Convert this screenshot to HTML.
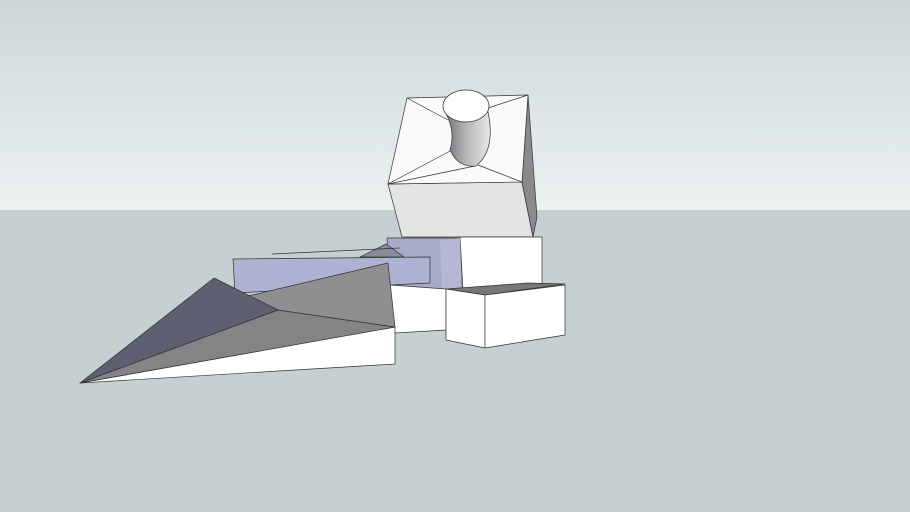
<!DOCTYPE html>
<html><head><style>html,body{margin:0;padding:0;width:910px;height:512px;overflow:hidden}</style></head>
<body>
<svg width="910" height="512" viewBox="0 0 910 512" xmlns="http://www.w3.org/2000/svg">
<defs>
<linearGradient id="sky" x1="0" y1="0" x2="0" y2="1">
<stop offset="0" stop-color="#cbd6d9"/><stop offset="1" stop-color="#ecf1f1"/>
</linearGradient>
<linearGradient id="cyl" x1="0" y1="0" x2="1" y2="0">
<stop offset="0" stop-color="#6e6e72"/><stop offset="0.5" stop-color="#b8b8bb"/><stop offset="1" stop-color="#e8e8e8"/>
</linearGradient>
</defs>
<rect x="0" y="0" width="910" height="210" fill="url(#sky)"/>
<rect x="0" y="210" width="910" height="302" fill="#c5d0d1"/>
<g stroke="#333" stroke-width="0.7" stroke-linejoin="round">
<polygon points="388,184 522,182 533,237 402,237" fill="#e4e4e4"/>
<polygon points="528,95 537,217 533,237 522,182" fill="#8a8a8c"/>
<polygon points="407,98 528,95 522,182 388,184" fill="#fafafa"/>
<line x1="407" y1="98" x2="448" y2="120"/>
<line x1="528" y1="95" x2="488" y2="108"/>
<line x1="388" y1="184" x2="452" y2="150"/>
<line x1="522" y1="182" x2="478" y2="165"/>
<line x1="388" y1="184" x2="475" y2="166"/>
<path d="M444,110 Q456,130 450,150 Q458,168 476,166 Q496,150 488,112 Z" fill="url(#cyl)"/>
<ellipse cx="466" cy="106" rx="23" ry="16" fill="#fff"/>
<polygon points="460,237 542,237 542,284 463,290" fill="#fff"/>
<polygon points="387,238 460,238 462,290 390,290" fill="#a7abc8"/>
<polygon points="440,240 460,238 462,290 442,290" fill="#b4b8d6" stroke="none"/>
<polygon points="390,285 446,289 446,330 395,333" fill="#fff"/>
<polygon points="446,289 528,283 565,284 485,295" fill="#777"/>
<polygon points="446,289 485,295 485,348 446,340" fill="#fff"/>
<polygon points="485,295 565,285 565,335 485,348" fill="#fff"/>
<polygon points="360,257 386,244 404,257" fill="#8c8c98"/>
<line x1="272" y1="254" x2="400" y2="248"/>
<polygon points="233,259 430,257 430,283 235,293" fill="#aeb2d2"/>
<polygon points="80,383 395,327 395,364" fill="#fff"/>
<polygon points="80,383 278,310 395,327" fill="#848486"/>
<polygon points="248,296 388,263 395,327 278,310" fill="#8f8f91"/>
<polygon points="80,383 214,278 278,310" fill="#5d6070"/>
</g>
</svg>
</body></html>
